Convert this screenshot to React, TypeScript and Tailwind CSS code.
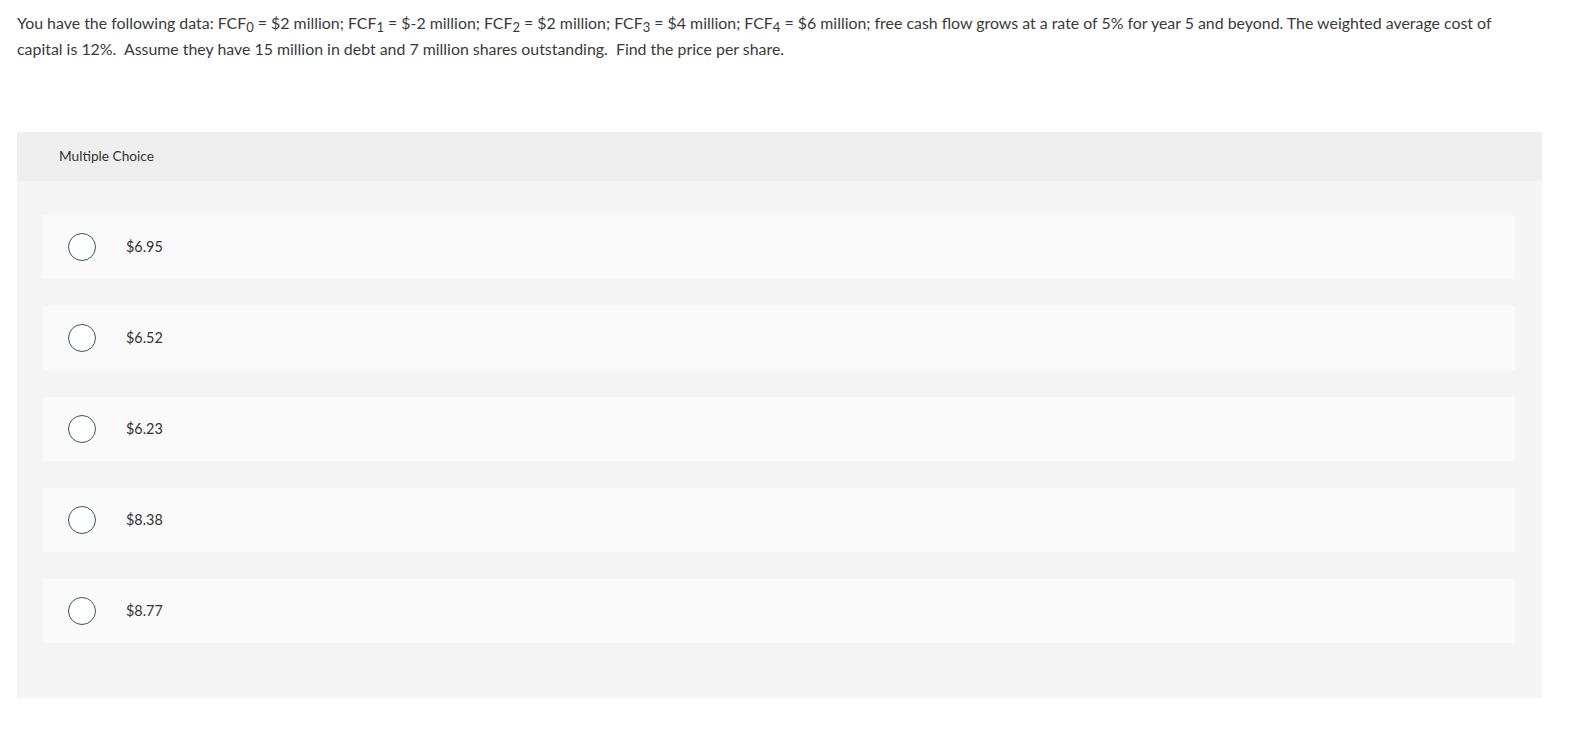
import React from "react";

const options = ["$6.95", "$6.52", "$6.23", "$8.38", "$8.77"];

function Sub({ children }: { children: React.ReactNode }) {
  return <span className="text-[13px] relative top-[3px] leading-none">{children}</span>;
}

export default function App() {
  return (
    <div className="bg-white min-h-[733px] w-[1572px] text-[#333333]" style={{ fontFamily: "Lato, 'Open Sans', sans-serif" }}>
      <div className="pl-[17px] pr-[40px] pt-[10px] text-[15.9px] leading-[26px] text-[#3a3a3a]">
        You have the following data: FCF<Sub>0</Sub> = $2 million; FCF<Sub>1</Sub> = $-2 million; FCF<Sub>2</Sub> = $2 million; FCF<Sub>3</Sub> = $4 million; FCF<Sub>4</Sub> = $6 million; free cash flow grows at a rate of 5% for year 5 and beyond. The weighted average cost of capital is 12%.&nbsp; Assume they have 15 million in debt and 7 million shares outstanding.&nbsp; Find the price per share.
      </div>
      <div className="ml-[17px] mt-[70px] w-[1525px] bg-[#f5f5f5]">
        <div className="h-[49px] bg-[#efefef] flex items-center pl-[42px] text-[13.7px] text-[#333333]">Multiple Choice</div>
        <div className="pt-[34px] pb-[55px] pl-[26px] pr-[27px] flex flex-col gap-[27px]">
          {options.map((o) => (
            <div key={o} className="h-[64px] bg-[#fafafa] flex items-center pl-[25px]">
              <div className="w-[28px] h-[28px] rounded-full border-[1.5px] border-[#3f5368] bg-white" />
              <span className="ml-[30px] text-[14.4px] text-[#333333]">{o}</span>
            </div>
          ))}
        </div>
      </div>
    </div>
  );
}
